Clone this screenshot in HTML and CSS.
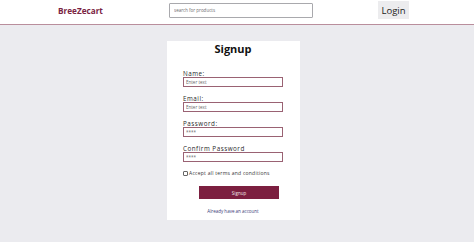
FILE: index.html
```html
<!DOCTYPE html>
<html>
<head>
<meta charset="utf-8">
<link rel="stylesheet" href="styles.css">
</head>
<body>
<header class="topbar">
  <div class="logo">BreeZecart</div>
  <input class="search" type="text" placeholder="search for products">
  <button class="login">Login</button>
</header>
<main class="page">
  <form class="card">
    <h1 class="title">Signup</h1>
    <div class="fields">
      <label class="field">
        <span class="label">Name:</span>
        <input class="input" type="text" placeholder="Enter text">
      </label>
      <label class="field">
        <span class="label">Email:</span>
        <input class="input" type="text" placeholder="Enter text">
      </label>
      <label class="field">
        <span class="label">Password:</span>
        <input class="input" type="text" placeholder="****">
      </label>
      <label class="field">
        <span class="label">Confirm Password</span>
        <input class="input" type="text" placeholder="****">
      </label>
    </div>
    <label class="terms"><span class="box"></span>Accept all terms and conditions</label>
    <button class="submit" type="button">Signup</button>
    <a class="already">Already have an account</a>
  </form>
</main>
</body>
</html>
```
FILE: styles.css
```css
* { box-sizing: border-box; }
html, body { margin: 0; padding: 0; }
body {
  background: #ebebef;
  font-family: "Open Sans", "DejaVu Sans", sans-serif;
  height: 242px;
  overflow: hidden;
}
.topbar {
  height: 25px;
  background: #ffffff;
  border-bottom: 1px solid #b98e9c;
  display: flex;
  align-items: center;
  gap: 65px;
  padding-left: 58px;
}
.logo {
  width: 46px;
  font-size: 8.2px;
  font-weight: 700;
  color: #7a2443;
  white-space: nowrap;
  margin-top: -3px;
}
.search {
  width: 144px;
  height: 15px;
  border: 1px solid #a9a9ad;
  border-radius: 1px;
  padding: 0 0 0 4px;
  font-size: 4.5px;
  font-family: inherit;
  outline: none;
  margin-top: -4px;
}
.search::placeholder { color: #6c6c70; }
.login {
  width: 31px;
  height: 18px;
  border: none;
  background: #ececee;
  color: #222;
  font-family: inherit;
  font-size: 9.5px;
  padding: 0;
  margin-top: -4px;
}
.page {
  padding: 16px 0 0 167px;
}
.card {
  width: 133px;
  height: 179px;
  background: #ffffff;
  padding: 1px 17px 0 16px;
  display: flex;
  flex-direction: column;
}
.title {
  margin: 0;
  text-align: center;
  font-size: 11px;
  font-weight: 700;
  color: #111;
  line-height: 13px;
}
.fields {
  margin-top: 15px;
  display: flex;
  flex-direction: column;
  gap: 8px;
}
.field {
  display: flex;
  flex-direction: column;
}
.label {
  font-size: 6.3px;
  line-height: 7px;
  letter-spacing: 0.5px;
  color: #2a2a2a;
  margin-bottom: 0;
}
.input {
  width: 100px;
  height: 10px;
  border: 1px solid #9a6273;
  padding: 0 0 0 2px;
  font-size: 4.5px;
  font-family: inherit;
  outline: none;
}
.input::placeholder { color: #666; }
.terms {
  margin-top: 8px;
  display: flex;
  align-items: center;
  font-size: 5px;
  letter-spacing: 0.25px;
  color: #333;
  white-space: nowrap;
}
.box {
  width: 5px;
  height: 5px;
  border: 0.7px solid #666;
  border-radius: 1px;
  margin-right: 1px;
}
.submit {
  margin: 10px 0 0 16px;
  width: 80px;
  height: 13px;
  background: #7c1f40;
  border: none;
  color: #f0e6ea;
  font-family: inherit;
  font-size: 4.5px;
  padding: 0;
}
.already {
  margin-top: 9px;
  text-align: center;
  font-size: 4.5px;
  color: #3a3a78;
}
```
